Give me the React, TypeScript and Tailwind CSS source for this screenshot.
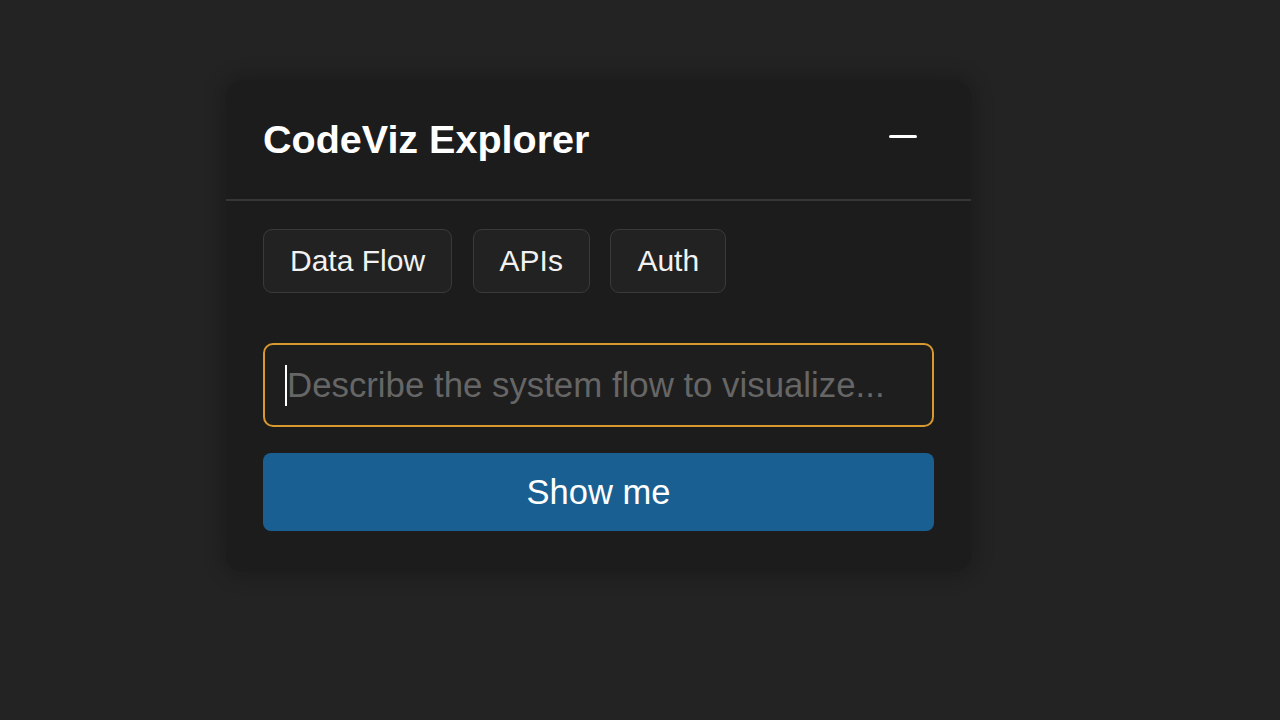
import React from 'react';

const topics = ['Data Flow', 'APIs', 'Auth'];

export default function App() {
  return (
    <div
      className="min-h-screen w-full bg-[#232323] pt-[80px] pl-[226px]"
      style={{ fontFamily: '"Liberation Sans", Arial, sans-serif' }}
    >
      <div className="w-[745px] rounded-[18px] bg-[#1c1c1c] shadow-[0_0_18px_6px_rgba(0,0,0,0.18)] pb-[41px]">
        <div className="flex h-[121px] items-center justify-between border-b-2 border-[#363636] pl-[37px] pr-[54px]">
          <h1 className="text-[39.5px] font-bold leading-none text-white">CodeViz Explorer</h1>
          <button className="mb-[6px] flex h-[20px] w-[28px] items-center justify-center">
            <span className="block h-[3px] w-[28px] rounded-full bg-white" />
          </button>
        </div>

        <div className="px-[37px]">
          <div className="mt-[28px] flex gap-[20.5px]">
            {topics.map((t) => (
              <button
                key={t}
                className="h-[64px] rounded-[9px] border border-[#3a3a3a] bg-[#222222] px-[26px] text-[30px] leading-none text-[#f2f2f2]"
              >
                {t}
              </button>
            ))}
          </div>

          <div className="relative mt-[50px]">
            <input
              type="text"
              placeholder="Describe the system flow to visualize..."
              className="h-[84px] w-full rounded-[10px] border-2 border-[#d8992f] bg-[#1e1e1e] pl-[22px] text-[34.8px] text-white outline-none placeholder:text-[#666666]"
            />
            <span className="absolute left-[22px] top-[22px] block h-[41px] w-[2px] bg-white" />
          </div>

          <button className="mt-[26px] h-[78px] w-full rounded-[8px] bg-[#1a5f92] text-[34.5px] leading-none text-white">
            Show me
          </button>
        </div>
      </div>
    </div>
  );
}
